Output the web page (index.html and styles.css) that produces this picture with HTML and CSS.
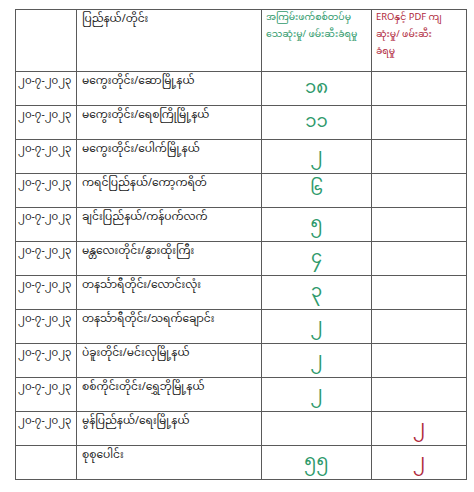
FILE: index.html
```html
<!DOCTYPE html>
<html lang="my">
<head>
<meta charset="utf-8">
<link rel="stylesheet" href="styles.css">
</head>
<body>
<table class="report">
  <colgroup>
    <col class="c-date"><col class="c-place"><col class="c-num"><col class="c-num2">
  </colgroup>
  <tr class="head">
    <td></td>
    <td class="place">ပြည်နယ်/တိုင်း</td>
    <td class="green hd"><span class="ln">အကြမ်းဖက်စစ်တပ်မှ</span><span class="ln">သေဆုံးမှု/ ဖမ်းဆီးခံရမှု</span></td>
    <td class="red hd"><span class="ln">EROနှင့် PDF ကျ</span><span class="ln">ဆုံးမှု/ ဖမ်းဆီး</span><span class="ln">ခံရမှု</span></td>
  </tr>
  <tr><td class="date">၂၀-၇-၂၀၂၃</td><td class="place">မကွေးတိုင်း/ဆောမြို့နယ်</td><td class="num green">၁၈</td><td class="num red"></td></tr>
  <tr><td class="date">၂၀-၇-၂၀၂၃</td><td class="place">မကွေးတိုင်း/ရေစကြိုမြို့နယ်</td><td class="num green">၁၁</td><td class="num red"></td></tr>
  <tr><td class="date">၂၀-၇-၂၀၂၃</td><td class="place">မကွေးတိုင်း/ပေါက်မြို့နယ်</td><td class="num green">၂</td><td class="num red"></td></tr>
  <tr><td class="date">၂၀-၇-၂၀၂၃</td><td class="place">ကရင်ပြည်နယ်/ကော့ကရိတ်</td><td class="num green">၆</td><td class="num red"></td></tr>
  <tr><td class="date">၂၀-၇-၂၀၂၃</td><td class="place">ချင်းပြည်နယ်/ကန်ပက်လက်</td><td class="num green">၅</td><td class="num red"></td></tr>
  <tr><td class="date">၂၀-၇-၂၀၂၃</td><td class="place">မန္တလေးတိုင်း/နွားထိုးကြီး</td><td class="num green">၄</td><td class="num red"></td></tr>
  <tr><td class="date">၂၀-၇-၂၀၂၃</td><td class="place">တနင်္သာရီတိုင်း/လောင်းလုံး</td><td class="num green">၃</td><td class="num red"></td></tr>
  <tr><td class="date">၂၀-၇-၂၀၂၃</td><td class="place">တနင်္သာရီတိုင်း/သရက်ချောင်း</td><td class="num green">၂</td><td class="num red"></td></tr>
  <tr><td class="date">၂၀-၇-၂၀၂၃</td><td class="place">ပဲခူးတိုင်း/မင်းလှမြို့နယ်</td><td class="num green">၂</td><td class="num red"></td></tr>
  <tr><td class="date">၂၀-၇-၂၀၂၃</td><td class="place">စစ်ကိုင်းတိုင်း/ရွှေဘိုမြို့နယ်</td><td class="num green">၂</td><td class="num red"></td></tr>
  <tr><td class="date">၂၀-၇-၂၀၂၃</td><td class="place">မွန်ပြည်နယ်/ရေးမြို့နယ်</td><td class="num green"></td><td class="num red">၂</td></tr>
  <tr><td class="date"></td><td class="place">စုစုပေါင်း</td><td class="num green">၅၅</td><td class="num red">၂</td></tr>
</table>
</body>
</html>
```

FILE: styles.css
```css
html, body {
  margin: 0;
  padding: 0;
  background: #ffffff;
}
body {
  font-family: "Noto Sans Myanmar", "Padauk", "Myanmar Text", "Noto Sans", "DejaVu Sans", sans-serif;
  color: #222222;
}
.report {
  border-collapse: collapse;
  margin: 9px 0 0 15px;
  table-layout: fixed;
  width: 451px;
}
.c-date { width: 61px; }
.c-place { width: 185px; }
.c-num { width: 110px; }
.c-num2 { width: 95px; }
.report td {
  border: 1px solid #5a5a5a;
  padding: 0;
  font-size: 10.7px;
  line-height: 17px;
  vertical-align: top;
  height: 34px;
  box-sizing: border-box;
}
.report tr.head td {
  height: 62px;
}
.report td.date {
  padding: 1px 0 0 2px;
  font-size: 10.2px;
  white-space: nowrap;
}
.report td.place {
  padding: 1px 0 0 5px;
  white-space: nowrap;
}
.report td.hd {
  padding: 0 0 0 4px;
  font-size: 9.4px;
  white-space: nowrap;
}
.report td.hd .ln {
  display: block;
  height: 17px;
  line-height: 17px;
}
.report td.num {
  text-align: center;
  vertical-align: middle;
  font-size: 18px;
  line-height: 20px;
}
.green { color: #2f9a6c; }
.red { color: #b02a3c; }
```
